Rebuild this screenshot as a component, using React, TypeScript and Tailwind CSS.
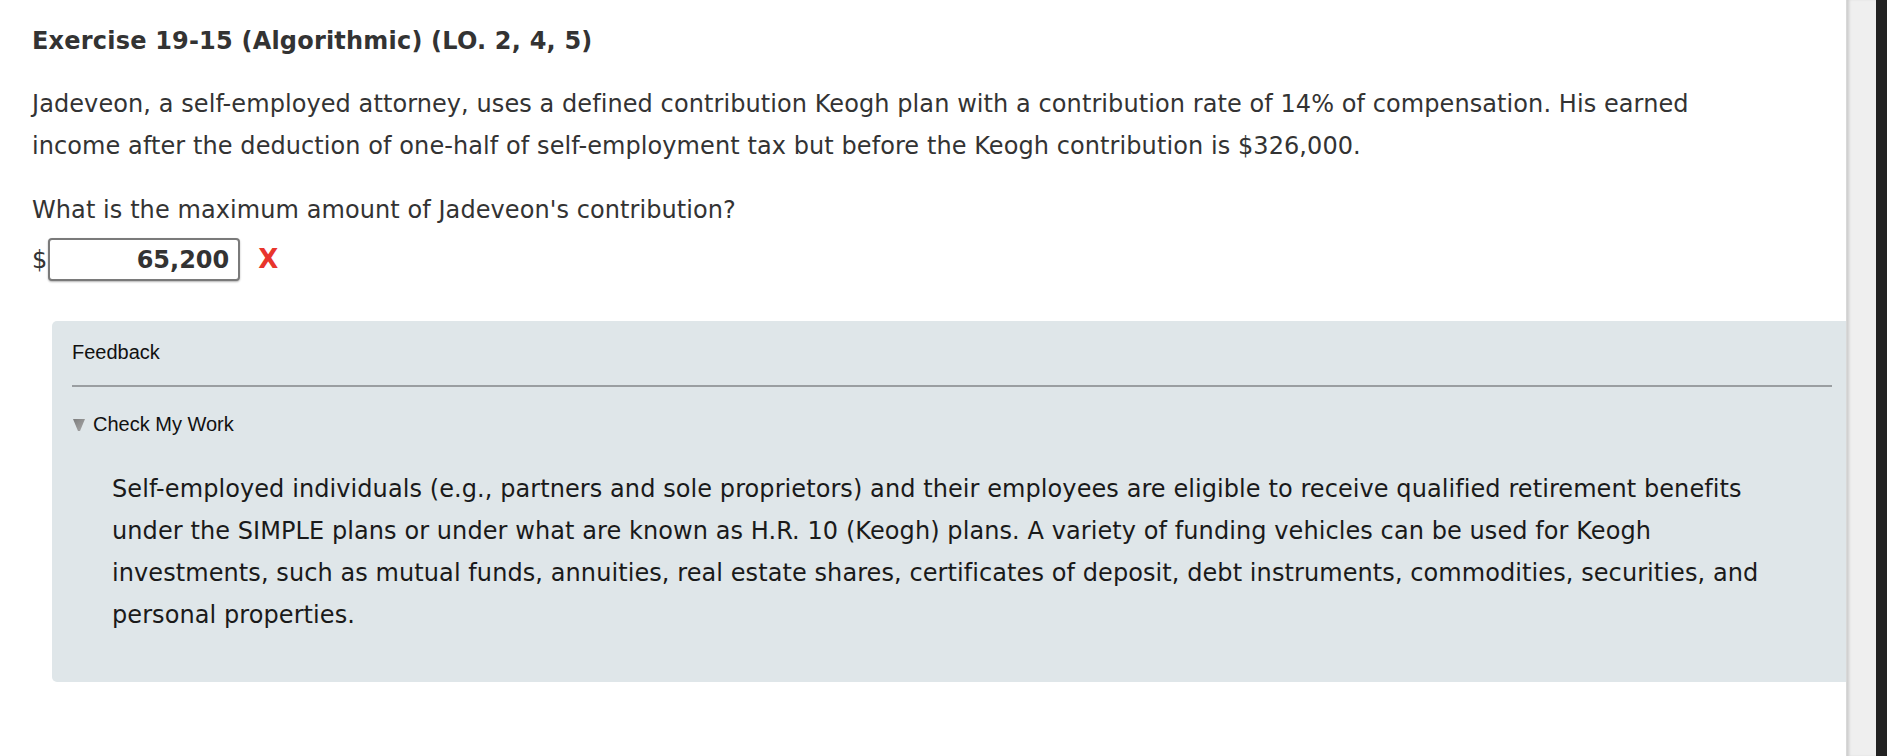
import React from 'react';

const verdana = { fontFamily: '"DejaVu Sans", Verdana, sans-serif' };
const arial = { fontFamily: '"Liberation Sans", Arial, sans-serif' };

const App: React.FC = () => {
  return (
    <div className="flex h-[756px] w-full overflow-hidden bg-white">
      <main className="flex-1 min-w-0 bg-white pl-[32px] pt-[29px] text-[#333]" style={verdana}>
        <h1 className="text-[24px] leading-[24px] font-bold tracking-[0.2px] text-[#333]">
          Exercise 19-15 (Algorithmic) (LO. 2, 4, 5)
        </h1>

        <p className="mt-[30px] max-w-[1720px] text-[24px] leading-[42px] tracking-[0.08px]">
          Jadeveon, a self-employed attorney, uses a defined contribution Keogh plan with a contribution rate of 14% of compensation. His earned income after the deduction of one-half of self-employment tax but before the Keogh contribution is $326,000.
        </p>

        <p className="mt-[22px] text-[24px] leading-[42px] tracking-[0.08px]">What is the maximum amount of Jadeveon's contribution?</p>

        <div className="mt-[7px] flex items-center h-[43px]">
          <span className="text-[24px]">$</span>
          <div className="ml-[1px] flex h-[43px] w-[192px] items-center justify-end rounded-[4px] border-2 border-[#7a7a7a] bg-white pr-[9px] shadow-[0_1px_2px_rgba(0,0,0,0.3)]">
            <span className="text-[24px] font-bold text-[#333]">65,200</span>
          </div>
          <span className="ml-[18px] text-[26px] font-bold text-[#e8352c]">X</span>
        </div>

        <section className="ml-[20px] mt-[40px] rounded-l-[5px] bg-[#dfe6e9] pl-[20px] pr-[14px] pt-[20px] pb-[46px]">
          <div style={arial} className="text-[20px] leading-[23px] text-[#111]">
            Feedback
          </div>
          <div className="mt-[21px] h-[2px] bg-[#9a9ea1]" />
          <div style={arial} className="mt-[26px] flex items-center text-[20px] leading-[23px] text-[#111]">
            <svg width="12" height="12" viewBox="0 0 12 12" className="mr-[8px] ml-[1px]">
              <defs>
                <linearGradient id="tri" x1="0" y1="0" x2="1" y2="1">
                  <stop offset="0" stopColor="#7d7d7d" />
                  <stop offset="1" stopColor="#a9a9a9" />
                </linearGradient>
              </defs>
              <polygon points="0,0 12,0 7,12 5,12" fill="url(#tri)" />
            </svg>
            Check My Work
          </div>
          <p className="mt-[32px] ml-[40px] max-w-[1680px] text-[24px] leading-[42px] tracking-[0.08px] text-[#1a1a1a]">
            Self-employed individuals (e.g., partners and sole proprietors) and their employees are eligible to receive qualified retirement benefits under the SIMPLE plans or under what are known as H.R. 10 (Keogh) plans. A variety of funding vehicles can be used for Keogh investments, such as mutual funds, annuities, real estate shares, certificates of deposit, debt instruments, commodities, securities, and personal properties.
          </p>
        </section>
      </main>
      <div className="w-[30px] shrink-0 bg-[#efefef] shadow-[inset_3px_0_3px_-1px_rgba(0,0,0,0.15)] border-l border-[#d8d8d8]" />
      <div className="w-[11px] shrink-0 bg-[#222]" />
    </div>
  );
};

export default App;
